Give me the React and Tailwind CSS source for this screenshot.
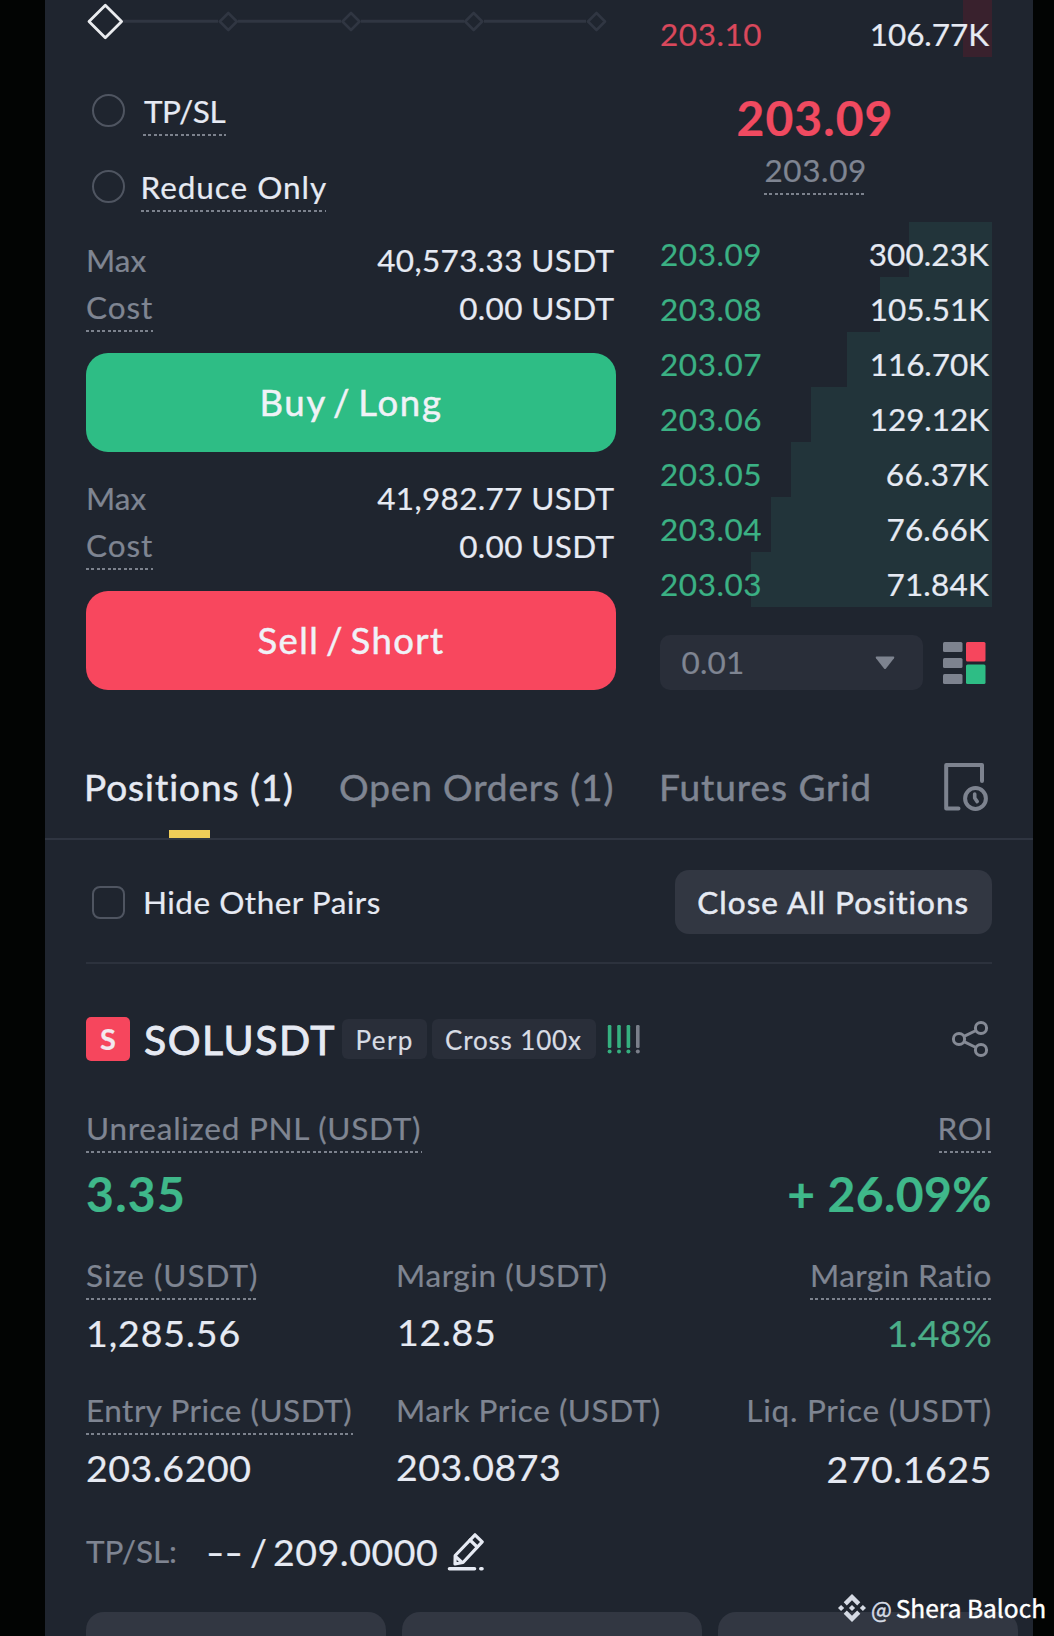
import React from 'react';
import clsx from 'clsx';

const bids = [
    { price: '203.09', amount: '300.23K', depth: 83.5, tracking: 'tracking-[0.1px]' },
    { price: '203.08', amount: '105.51K', depth: 112.5, tracking: 'tracking-[-0.05px]' },
    { price: '203.07', amount: '116.70K', depth: 145.5, tracking: 'tracking-[-0.05px]' },
    { price: '203.06', amount: '129.12K', depth: 181.5, tracking: 'tracking-[-0.05px]' },
    { price: '203.05', amount: '66.37K', depth: 201, tracking: 'tracking-[0.3px]' },
    { price: '203.04', amount: '76.66K', depth: 221.5, tracking: 'tracking-[0.2px]' },
    { price: '203.03', amount: '71.84K', depth: 241.5, tracking: 'tracking-[0.2px]' },
];

// Small caption with an optional dotted underline
function Label({ children, dotted, className, textClass }) {
    return (
        <div className={clsx('h-[46px] text-[31.5px] whitespace-nowrap', className || 'text-[#7f8592]')}>
            <div className={clsx('leading-[43px]', textClass)}>{children}</div>
            {dotted && (
                <div className="mt-px h-[1.5px] bg-[repeating-linear-gradient(90deg,#7c828d_0_3px,transparent_3px_5.4px)]" />
            )}
        </div>
    );
}

function AmountSlider() {
    return (
        <svg className="block" width="530" height="46" viewBox="0 0 530 46" fill="none">
            <path
                d="M37 21.3H132M152 21.3H255M275 21.3H378M398 21.3H500"
                stroke="#303642"
                strokeWidth="3"
            />
            {[142.3, 265, 387.7, 510.5].map((x) => (
                <path
                    key={x}
                    transform={`translate(${x} 21.5)`}
                    d="M-8.5 0L0 -8.5L8.5 0L0 8.5Z"
                    stroke="#303642"
                    strokeWidth="2.6"
                    strokeLinejoin="round"
                />
            ))}
            <path d="M3 21.5L19.3 5.2L35.6 21.5L19.3 37.8Z" stroke="#eaecef" strokeWidth="2.8" strokeLinejoin="round" />
        </svg>
    );
}

function OptionRow({ children }) {
    return (
        <div className="flex h-[46px] items-start pl-[5.5px]">
            <div className="mt-1 size-[33px] shrink-0 rounded-full border-[2.5px] border-[#4f5561]" />
            {children}
        </div>
    );
}

function OrderSide({ max, button, buttonClass }) {
    return (
        <>
            <div className="flex h-[45px] justify-between text-[31.5px] leading-[45px]">
                <span className="text-[#7f8592]">Max</span>
                <span className="pr-[1.5px] tracking-[0.36px]">{max}</span>
            </div>
            <div className="mt-[3px] flex h-[46px] justify-between">
                <Label dotted className="w-[66.5px] text-[#7f8592]" textClass="tracking-[0.9px]">Cost</Label>
                <span className="pr-[1.5px] text-[31.5px] leading-[44px] tracking-[0.36px]">0.00 USDT</span>
            </div>
            <button
                className={clsx(
                    'mt-[21px] block h-[99px] w-full rounded-[22px] text-[36.5px] [word-spacing:-4px] text-[#f0f2f7] [-webkit-text-stroke:0.5px]',
                    buttonClass
                )}
            >
                {button}
            </button>
        </>
    );
}

function OrderBook() {
    return (
        <div className="w-[332px]">
            <div className="relative flex h-[57px] justify-between pt-3 pr-[3px] text-[31.5px] leading-[45px]">
                <div className="absolute top-0 right-0 h-full w-[29px] bg-[#39212d]" />
                <span className="relative tracking-[0.55px] text-[#d9485c]">203.10</span>
                <span className="relative tracking-[-0.05px]">106.77K</span>
            </div>

            <div className="mt-[31px] pr-[22px] text-center text-[48px] leading-[60px] font-bold tracking-[1.05px] text-[#f04a60]">
                203.09
            </div>
            <Label
                dotted
                className="mt-px ml-[103.5px] w-[103px] text-[#7f8592]"
                textClass="pl-px tracking-[0.6px]"
            >
                203.09
            </Label>

            <div className="mt-[27px]">
                {bids.map((row) => (
                    <div
                        key={row.price}
                        className="relative flex h-[55px] justify-between pt-[10px] pr-[3px] text-[31.5px] leading-[45px]"
                    >
                        <div className="absolute top-0 right-0 h-full bg-[#22343a]" style={{ width: row.depth }} />
                        <span className="relative tracking-[0.55px] text-[#3bb184]">{row.price}</span>
                        <span className={clsx('relative', row.tracking)}>{row.amount}</span>
                    </div>
                ))}
            </div>

            <div className="mt-7 flex h-[55px] items-center">
                <div className="flex h-full w-[263px] items-center justify-between rounded-[10px] bg-[#292e39] pr-7 pl-[21.5px]">
                    <span className="pt-px text-[31.5px] tracking-[0.2px] text-[#7f8592]">0.01</span>
                    <svg width="20" height="14" viewBox="0 0 20 14" fill="#7d838f">
                        <path d="M1.5 0.5H18.5Q20 0.8 19 2.2L11 12.6Q10 13.6 9 12.6L1 2.2Q0 0.8 1.5 0.5Z" />
                    </svg>
                </div>
                <svg className="ml-5" width="43" height="44" viewBox="0 0 43 44">
                    <g fill="#7d838f">
                        <rect x="0" y="1" width="19.5" height="10" rx="1.5" />
                        <rect x="0" y="17" width="19.5" height="10" rx="1.5" />
                        <rect x="0" y="33" width="19.5" height="10" rx="1.5" />
                    </g>
                    <rect x="23" y="1" width="19.5" height="19.5" rx="1.5" fill="#f6465d" />
                    <rect x="23" y="23.5" width="19.5" height="19.5" rx="1.5" fill="#2ebd85" />
                </svg>
            </div>
        </div>
    );
}

function HistoryIcon() {
    return (
        <svg width="46" height="50" viewBox="0 0 46 50" fill="none" stroke="#7d838f" strokeWidth="4" strokeLinecap="round" strokeLinejoin="round">
            <path d="M15.5 46.5H3.2V3H39V19" />
            <circle cx="32.5" cy="36.5" r="10.4" />
            <path d="M31.7 32V36L34.2 39.6" strokeWidth="3.6" />
        </svg>
    );
}

function ShareIcon() {
    return (
        <svg width="38" height="38" viewBox="0 0 38 38" fill="none" stroke="#858a95" strokeWidth="3">
            <circle cx="8" cy="19" r="5.6" />
            <circle cx="30" cy="8" r="5.6" />
            <circle cx="30" cy="30" r="5.6" />
            <path d="M13 16.4L25 10.5M13 21.6L25 27.5" />
        </svg>
    );
}

function RiskBars() {
    return (
        <svg className="ml-[11px]" width="34" height="30" viewBox="0 0 34 30">
            {['#35b07f', '#35b07f', '#35b07f', '#7a7f8a'].map((color, i) => (
                <g key={i} transform={`translate(${2.6 + i * 9.4} 0)`} fill={color}>
                    <rect x="-1.8" y="1" width="3.6" height="23" rx="1.2" />
                    <circle cx="0" cy="27.5" r="2" />
                </g>
            ))}
        </svg>
    );
}

function EditIcon() {
    return (
        <svg width="38" height="38" viewBox="0 0 38 38" fill="none" stroke="#e6eaf3" strokeWidth="3.2" strokeLinejoin="round" strokeLinecap="round">
            <path d="M8.2 22.5L28 1.8L35.2 8.8L16 29.5L8 31Z" />
            <path d="M23 7L30.2 14M8.5 23.5L14.8 29.3" />
            <path d="M2.5 35.7H27.5M33.8 35.7H35" strokeWidth="3.6" />
        </svg>
    );
}

function Value({ children, className }) {
    return <div className={clsx('relative mt-[9px] text-[37.5px] leading-[47px] whitespace-nowrap', className)}>{children}</div>;
}

function Position() {
    return (
        <div className="px-[41px]">
            <div className="mt-[53px] flex h-11 items-center">
                <div className="flex size-11 items-center justify-center rounded-[5px] bg-[#f6465d] pb-px text-[29px] font-bold text-[#f3e8ee]">
                    S
                </div>
                <span className="ml-[14px] w-[198px] pt-px text-[41px] tracking-[1.5px] [-webkit-text-stroke:0.9px]">SOLUSDT</span>
                <span className="h-10 w-[84.5px] rounded-md bg-[#292e39] pl-[13.5px] text-[26px] leading-[42px] tracking-[1.4px] text-[#d8dce4]">
                    Perp
                </span>
                <span className="ml-[5px] h-10 w-[164px] rounded-md bg-[#292e39] pl-[13.5px] text-[26px] leading-[42px] tracking-[0.85px] text-[#d8dce4]">
                    Cross 100x
                </span>
                <RiskBars />
                <div className="ml-auto pr-[3px]">
                    <ShareIcon />
                </div>
            </div>

            <div className="mt-[46px] flex justify-between">
                <Label dotted className="w-[336px] text-[#7f8592]" textClass="tracking-[0.75px]">
                    Unrealized PNL (USDT)
                </Label>
                <Label dotted className="w-[53.5px] text-[#7f8592]" textClass="-ml-px tracking-[0.64px]">ROI</Label>
            </div>
            <div className="mt-[11px] flex h-[59px] justify-between text-[48px] leading-[60px] font-bold text-[#3fb88a]">
                <span className="tracking-[1.3px]">3.35</span>
                <span className="tracking-[0.39px]">+ 26.09%</span>
            </div>

            <div className="mt-[31px] grid grid-cols-[310px_278px_318px]">
                <div>
                    <Label dotted className="w-[173px] text-[#7f8592]" textClass="tracking-[0.97px]">Size (USDT)</Label>
                    <Value className="tracking-[0.9px]">1,285.56</Value>
                </div>
                <div>
                    <Label textClass="tracking-[0.6px]">Margin (USDT)</Label>
                    <Value className="top-[-1.5px] pl-px tracking-[0.73px]">12.85</Value>
                </div>
                <div className="flex flex-col items-end">
                    <Label dotted className="w-[182px] text-[#7f8592]" textClass="tracking-[0.41px]">Margin Ratio</Label>
                    <Value className="tracking-[0.23px] text-[#4bae88]">1.48%</Value>
                </div>
            </div>

            <div className="mt-[33px] grid grid-cols-[310px_278px_318px]">
                <div>
                    <Label dotted className="w-[267px] text-[#7f8592]" textClass="tracking-[0.5px]">Entry Price (USDT)</Label>
                    <Value className="tracking-[0.56px]">203.6200</Value>
                </div>
                <div>
                    <Label textClass="tracking-[0.53px]">Mark Price (USDT)</Label>
                    <Value className="-top-px tracking-[0.52px]">203.0873</Value>
                </div>
                <div className="flex flex-col items-end">
                    <Label textClass="tracking-[0.78px]">Liq. Price (USDT)</Label>
                    <Value className="top-px tracking-[0.56px]">270.1625</Value>
                </div>
            </div>

            <div className="mt-9 flex h-[50px] items-center text-[37.5px] whitespace-nowrap">
                <span className="w-[120px] text-[31.5px] tracking-[-0.12px] text-[#7f8592]">TP/SL:</span>
                <span className="w-[44px] origin-left scale-x-[1.32]">--</span>
                <span className="w-[23px]">/</span>
                <span className="tracking-[0.52px]">209.0000</span>
                <div className="ml-[9px]">
                    <EditIcon />
                </div>
            </div>

            <div className="mt-[35px] flex gap-4">
                <div className="h-24 w-[300px] shrink-0 rounded-[18px] bg-[#323742]" />
                <div className="h-24 w-[300px] shrink-0 rounded-[18px] bg-[#323742]" />
                <div className="h-24 w-[300px] shrink-0 rounded-[18px] bg-[#323742]" />
            </div>
        </div>
    );
}

export default function App() {
    return (
        <div className="relative h-[1636px] w-[1054px] overflow-hidden bg-[#020403] font-[Lato,sans-serif]">
            <div className="ml-[45px] h-full w-[988px] overflow-hidden bg-[#1f252f] text-[#e6eaf3] [-webkit-text-stroke:0.2px]">
                <div className="flex h-[720px] gap-11 pl-[41px]">
                    <div className="w-[530px]">
                        <AmountSlider />
                        <div className="mt-11 flex flex-col gap-[30px]">
                            <OptionRow>
                                <Label dotted className="ml-[18.5px] w-[83px]" textClass="pl-px tracking-[-0.5px]">TP/SL</Label>
                            </OptionRow>
                            <OptionRow>
                                <Label dotted className="ml-[16px] w-[185px]" textClass="tracking-[0.95px]">Reduce Only</Label>
                            </OptionRow>
                        </div>
                        <div className="mt-[26px]">
                            <OrderSide max="40,573.33 USDT" button="Buy / Long" buttonClass="bg-[#2ebd85] tracking-[1.7px]" />
                        </div>
                        <div className="mt-6">
                            <OrderSide max="41,982.77 USDT" button="Sell / Short" buttonClass="bg-[#f8475e] tracking-[1.4px]" />
                        </div>
                    </div>
                    <OrderBook />
                </div>

                <div className="flex h-[120px] items-center border-b-2 border-[#2f3541] pt-[15px] pr-[44.5px] pl-[39px] text-[37px] tracking-[0.95px] whitespace-nowrap text-[#7f8592] [-webkit-text-stroke:0.5px]">
                    <div className="relative flex h-full w-[255px] items-center text-[#e6eaf3]">
                        Positions (1)
                        <div className="absolute bottom-0 left-[84.5px] h-2 w-[41.5px] bg-[#f0cd58]" />
                    </div>
                    <div className="w-[320px] tracking-[0.88px]">Open Orders (1)</div>
                    <div>Futures Grid</div>
                    <div className="ml-auto">
                        <HistoryIcon />
                    </div>
                </div>

                <div className="mx-[41px] flex h-[124px] items-center border-b-2 border-[#2c323d] pt-[2px]">
                    <div className="ml-[5.5px] size-[33px] rounded-[8px] border-[2.5px] border-[#4f5561]" />
                    <span className="ml-[18.5px] pt-[2px] text-[31.5px] tracking-[0.5px]">Hide Other Pairs</span>
                    <button className="ml-auto h-16 w-[317.5px] rounded-[14px] bg-[#323742] pt-[2px] text-[31.5px] tracking-[1px] [-webkit-text-stroke:0.5px]">
                        Close All Positions
                    </button>
                </div>

                <Position />
            </div>

            <div className="absolute top-[1588px] right-[8px] flex h-10 items-center font-['Noto_Sans_CJK_SC',sans-serif] text-[24.5px] leading-10 text-white">
                <svg className="mr-[5px]" width="28" height="28" viewBox="0 0 28 28" fill="#d5dae4">
                    <path d="M14 0L22.3 8.3L19.2 11.4L14 6.2L8.8 11.4L5.7 8.3Z" />
                    <path d="M14 28L5.7 19.7L8.8 16.6L14 21.8L19.2 16.6L22.3 19.7Z" />
                    <path d="M14 10.9L17.1 14L14 17.1L10.9 14Z" />
                    <path d="M3.1 10.9L6.2 14L3.1 17.1L0 14Z" />
                    <path d="M24.9 10.9L28 14L24.9 17.1L21.8 14Z" />
                </svg>
                <span className="mr-[4px] text-[22px] text-[#d5dae4] [-webkit-text-stroke:0.5px]">@</span>
                <span className="[-webkit-text-stroke:0.4px]">Shera Baloch</span>
            </div>
        </div>
    );
}
